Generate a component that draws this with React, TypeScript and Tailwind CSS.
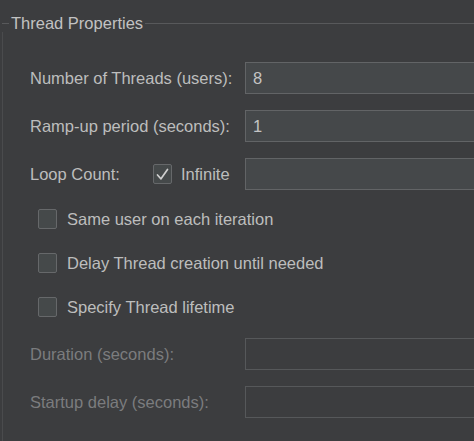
import React from 'react';

// Thread Group — "Thread Properties" panel (Darcula-ish theme)

function Field({ value = '' }: { value?: string }) {
  return (
    <div className="h-[32px] w-[260px] shrink-0 border border-[#626466] bg-[#45484a] flex items-center pl-[7px] text-[#c4c4c4]">
      {value}
    </div>
  );
}

function Check({ checked = false }: { checked?: boolean }) {
  return (
    <div className="w-[19px] h-[20px] border border-[#66686a] rounded-[2px] bg-[#45494a] flex items-center justify-center shrink-0">
      {checked && (
        <svg width="15" height="15" viewBox="0 0 15 15" fill="none">
          <path d="M2.5 8 L6 11.8 L12.5 2.5" stroke="#cfcfcf" strokeWidth="1.7" strokeLinecap="round" strokeLinejoin="round" />
        </svg>
      )}
    </div>
  );
}

function CheckRow({ label }: { label: string }) {
  return (
    <div className="flex items-center gap-[10px] h-[20px]">
      <Check />
      <span className="whitespace-nowrap">{label}</span>
    </div>
  );
}

export default function App() {
  return (
    <div className="w-[474px] h-[441px] overflow-hidden bg-[#3c3d3f] text-[#bdbdbd] text-[16.5px] leading-none whitespace-nowrap font-['Liberation_Sans','Helvetica',sans-serif]">
      {/* titled border */}
      <div className="flex items-center pt-[14px] h-[32px]">
        <div className="ml-[2px] w-[7px] h-px bg-[#58595b]" />
        <span className="px-[2px] text-[#c2c2c2]">Thread Properties</span>
        <div className="flex-1 h-px bg-[#58595b]" />
      </div>

      <div className="ml-[2px] border-l border-[#4a4b4d] h-[409px] w-[520px]">
        <div className="flex flex-col gap-[16px] pt-[30px]">
          <div className="flex items-center">
            <span className="w-[242px] shrink-0 pl-[27px]">Number of Threads (users):</span>
            <Field value="8" />
          </div>
          <div className="flex items-center">
            <span className="w-[242px] shrink-0 pl-[27px]">Ramp-up period (seconds):</span>
            <Field value="1" />
          </div>
          <div className="flex items-center">
            <span className="w-[150px] shrink-0 pl-[27px]">Loop Count:</span>
            <div className="w-[92px] shrink-0 flex items-center gap-[9px]">
              <Check checked />
              <span>Infinite</span>
            </div>
            <Field />
          </div>
        </div>

        <div className="flex flex-col gap-[24px] pt-[19px] pl-[35px]">
          <CheckRow label="Same user on each iteration" />
          <CheckRow label="Delay Thread creation until needed" />
          <CheckRow label="Specify Thread lifetime" />
        </div>

        <div className="flex flex-col gap-[16px] pt-[21px] text-[#7b7c7e]">
          <div className="flex items-center">
            <span className="w-[242px] shrink-0 pl-[27px]">Duration (seconds):</span>
            <div className="h-[32px] w-[260px] shrink-0 border border-[#56585a]" />
          </div>
          <div className="flex items-center">
            <span className="w-[242px] shrink-0 pl-[27px]">Startup delay (seconds):</span>
            <div className="h-[32px] w-[260px] shrink-0 border border-[#56585a]" />
          </div>
        </div>
      </div>
    </div>
  );
}
